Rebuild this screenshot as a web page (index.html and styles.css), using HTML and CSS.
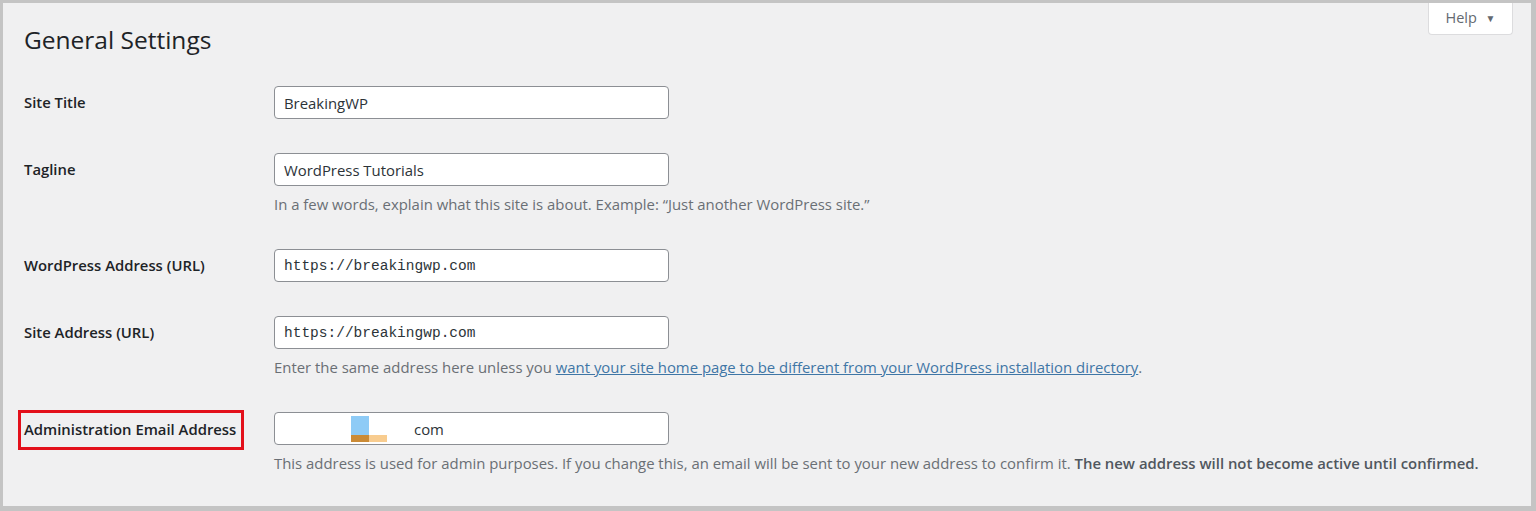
FILE: index.html
```html
<!DOCTYPE html>
<html lang="en">
<head>
    <meta charset="UTF-8">
    <meta name="viewport" content="width=device-width, initial-scale=1.0">
    <title>General Settings</title>
    <link rel="stylesheet" href="styles.css">
</head>
<body>
    <div class="frame">
        <!-- Help tab -->
        <button class="help-tab" type="button">Help <span class="help-arrow">&#9660;</span></button>

        <div class="wrap">
            <h1>General Settings</h1>

            <form class="settings">
                <div class="row">
                    <label class="row-label" for="blogname">Site Title</label>
                    <div class="row-field">
                        <input type="text" id="blogname" value="BreakingWP">
                    </div>
                </div>

                <div class="row">
                    <label class="row-label" for="blogdescription">Tagline</label>
                    <div class="row-field">
                        <input type="text" id="blogdescription" value="WordPress Tutorials">
                        <p class="description">In a few words, explain what this site is about. Example: &ldquo;Just another WordPress site.&rdquo;</p>
                    </div>
                </div>

                <div class="row">
                    <label class="row-label" for="siteurl">WordPress Address (URL)</label>
                    <div class="row-field">
                        <input type="text" id="siteurl" class="code" value="https://breakingwp.com">
                    </div>
                </div>

                <div class="row">
                    <label class="row-label" for="home">Site Address (URL)</label>
                    <div class="row-field">
                        <input type="text" id="home" class="code" value="https://breakingwp.com">
                        <p class="description">Enter the same address here unless you <a href="#">want your site home page to be different from your WordPress installation directory</a>.</p>
                    </div>
                </div>

                <div class="row">
                    <div class="row-label">
                        <label class="highlight" for="admin_email">Administration Email Address</label>
                    </div>
                    <div class="row-field">
                        <div class="fake-input" id="admin_email">
                            <span class="blur">
                                <span class="blur-top"></span>
                                <span class="blur-bottom"><i></i><i></i></span>
                            </span>
                            <span class="email-end">com</span>
                        </div>
                        <p class="description">This address is used for admin purposes. If you change this, an email will be sent to your new address to confirm it. <strong>The new address will not become active until confirmed.</strong></p>
                    </div>
                </div>
            </form>
        </div>
    </div>
</body>
</html>
```

FILE: styles.css
```css
/* Basic reset */
* {
    margin: 0;
    padding: 0;
    box-sizing: border-box;
}
body {
    width: 1536px;
    height: 511px;
    overflow: hidden;
    font-family: "Open Sans", "Noto Sans", Arial, sans-serif;
    color: #1d2327;
    background: #f0f0f1;
}
/* Outer gray frame */
.frame {
    position: relative;
    height: 100%;
    border-style: solid;
    border-color: #c4c4c4;
    border-width: 3px 5px 5px 3px;
    background: #f0f0f1;
}
/* Help tab */
.help-tab {
    position: absolute;
    top: 0;
    right: 18px;
    width: 85px;
    height: 32px;
    background: #fff;
    border: 1px solid #dcdcde;
    border-top: none;
    border-radius: 0 0 4px 4px;
    color: #646970;
    font-family: inherit;
    font-size: 14.5px;
    cursor: pointer;
    padding-bottom: 2px;
}
.help-arrow {
    font-size: 10px;
    margin-left: 5px;
    position: relative;
    top: -1px;
}
/* Page wrapper */
.wrap {
    padding: 0 0 0 21px;
}
.wrap h1 {
    font-weight: 400;
    font-size: 24.5px;
    line-height: 32px;
    color: #1d2327;
    padding: 21px 0 13px;
}
/* Settings rows */
.row {
    display: flex;
    padding: 17px 0;
}
.row-label {
    width: 250px;
    flex: none;
    display: flex;
    align-items: flex-start;
    height: 33px;
    padding-top: 6px;
    font-size: 14.85px;
    font-weight: 600;
    color: #1d2327;
    line-height: 21px;
}
.row-label label {
    display: block;
}
.row-label .highlight {
    margin: -8px 0 0 -6px;
    padding: 6px 5px 7px 3px;
    border: 3px solid #e3101b;
    line-height: 21px;
}
.row-field input,
.fake-input {
    display: block;
    width: 395px;
    height: 33px;
    padding: 0 9px;
    background: #fff;
    border: 1px solid #8c8f94;
    border-radius: 4px;
    font-family: inherit;
    font-size: 14.9px;
    color: #2c3338;
}
.row-field input.code {
    font-family: "Liberation Mono", "DejaVu Sans Mono", monospace;
    font-size: 14.5px;
}
.description {
    margin-top: 7px;
    font-size: 14.9px;
    line-height: 22px;
    color: #6a6f75;
    white-space: nowrap;
}
.description a {
    color: #3f76a6;
}
.description strong {
    font-weight: 600;
    color: #50575e;
}
/* Blurred email block */
.fake-input {
    display: flex;
    align-items: center;
    padding-left: 76px;
}
.blur {
    display: flex;
    flex-direction: column;
    height: 26px;
    margin-top: 1px;
}
.blur-top {
    width: 18px;
    height: 19px;
    background: #8ecbf6;
}
.blur-bottom {
    display: flex;
    height: 7px;
}
.blur-bottom i {
    display: block;
    width: 18px;
    background: #cb8b36;
}
.blur-bottom i + i {
    background: #f8cc8f;
}
.email-end {
    margin-left: 27px;
}
```
